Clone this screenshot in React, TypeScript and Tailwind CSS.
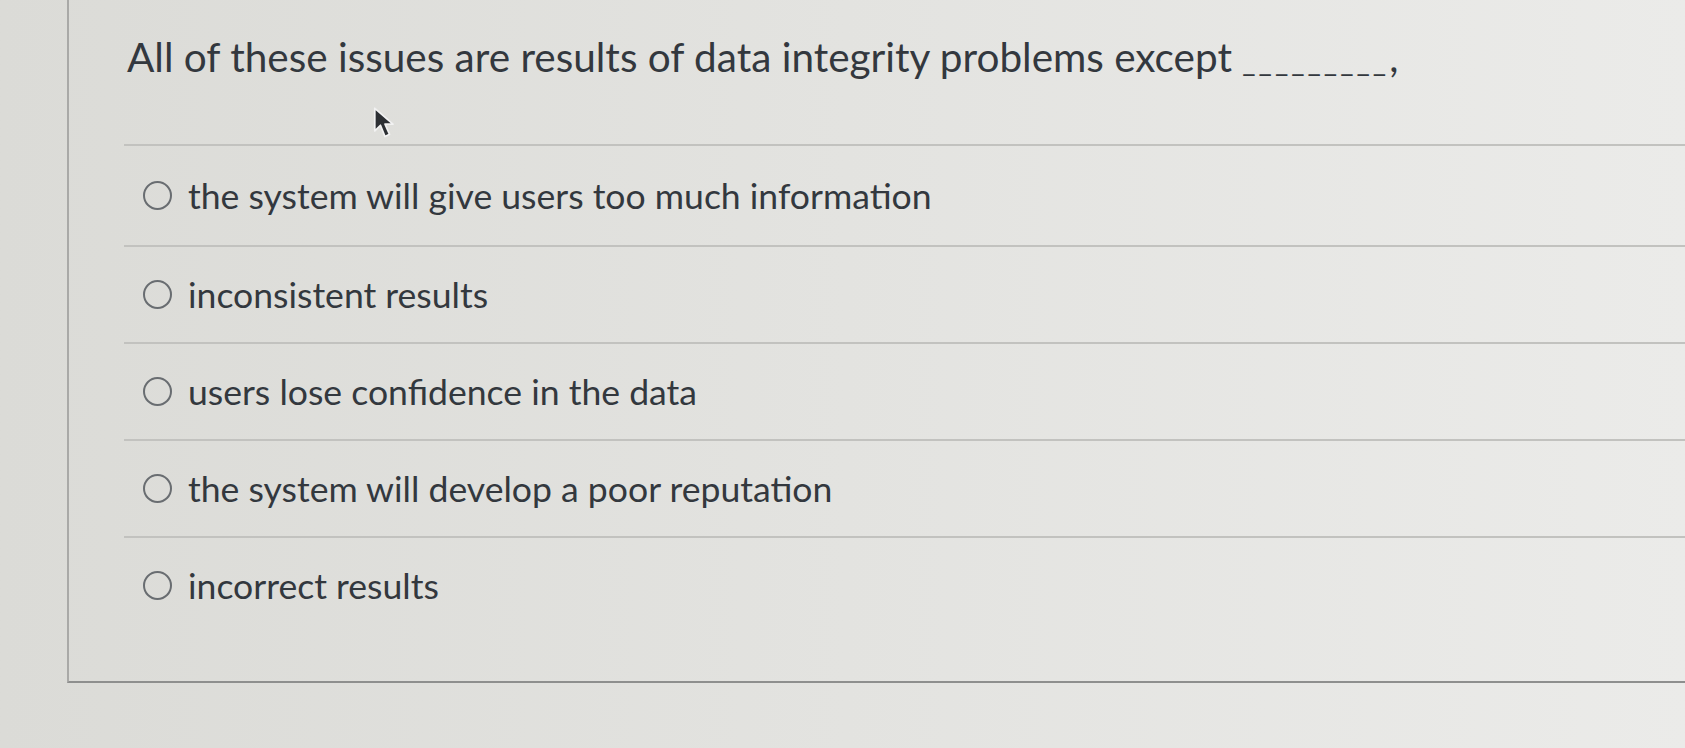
const options = [
  "the system will give users too much information",
  "inconsistent results",
  "users lose confidence in the data",
  "the system will develop a poor reputation",
  "incorrect results",
];

function Cursor() {
  return (
    <svg
      className="absolute left-[372px] top-[106px]"
      width="26"
      height="34"
      viewBox="0 0 22 30"
    >
      <path
        d="M2 2 L2 22 L7 17 L11 27 L15 25 L11 16 L18 16 Z"
        fill="#2c2f33"
        stroke="#f2f2f2"
        strokeWidth="1.5"
        strokeLinejoin="round"
      />
    </svg>
  );
}

export default function App() {
  return (
    <div
      className="relative w-[1685px] h-[748px] overflow-hidden bg-gradient-to-r from-[#dbdbd7] via-[#e3e3e0] to-[#ebebe9] text-[#33383e]"
      style={{ fontFamily: "Lato, 'Open Sans', sans-serif" }}
    >
      <div className="ml-[67px] h-[683px] border-l-2 border-b-2 border-l-[#a9a9a7] border-b-[#8e8f8e] flex flex-col">
        <div className="h-[144px] pl-[58px] pt-[33px]">
          <h1 className="text-[40.5px] leading-[48px]">
            All of these issues are results of data integrity problems except{" "}
            <span className="text-[29px] tracking-[3px]">_________</span>,
          </h1>
        </div>
        <div className="ml-[55px] flex flex-col">
          {options.map((opt, i) => (
            <label
              key={opt}
              className={`flex items-center border-t-2 border-[#c2c2bf] ${i === 0 ? "h-[101px]" : "h-[97px]"}`}
            >
              <span className="ml-[19px] w-[29px] h-[29px] rounded-full border-2 border-[#696d71] shrink-0" />
              <span className="ml-[16px] text-[35.6px] leading-[42px]">{opt}</span>
            </label>
          ))}
        </div>
      </div>
      <Cursor />
    </div>
  );
}
